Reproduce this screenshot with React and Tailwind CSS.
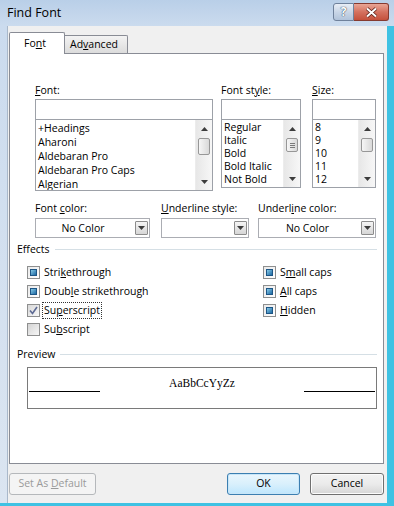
import React from 'react';

const Tri = ({ down }) => (
  <svg width="7" height="4" viewBox="0 0 7 4">
    <path d={down ? 'M0 0h7L3.5 4z' : 'M0 4h7L3.5 0z'} fill="#3c3c3c" />
  </svg>
);

function ScrollBar({ thumbClass, grip }) {
  return (
    <div className="w-[17px] h-full flex flex-col bg-gradient-to-r from-[#e7e7e7] to-[#f7f7f7] border-l border-[#ececec]">
      <div className="h-[17px] flex items-center justify-center">
        <Tri />
      </div>
      <div className="flex-1 px-[2px] pt-[1px]">
        <div className={`${thumbClass} rounded-[2px] border border-[#979797] bg-gradient-to-r from-[#f6f6f6] to-[#d9d9d9] flex flex-col items-center justify-center gap-[1px]`}>
          {grip && (
            <>
              <div className="w-[5px] h-px bg-[#7a7a7a]" />
              <div className="w-[5px] h-px bg-[#7a7a7a]" />
              <div className="w-[5px] h-px bg-[#7a7a7a]" />
            </>
          )}
        </div>
      </div>
      <div className="h-[17px] flex items-center justify-center">
        <Tri down />
      </div>
    </div>
  );
}

function ListBox({ items, boxClass, lineClass, thumbClass, grip }) {
  return (
    <div className={`${boxClass} border border-t-0 border-[#9da1a8] bg-white flex`}>
      <div className="flex-1 min-w-0 pl-[2px] pt-[1px] overflow-hidden">
        {items.map((it) => (
          <div key={it} className={`${lineClass} whitespace-nowrap`}>
            {it}
          </div>
        ))}
      </div>
      <ScrollBar thumbClass={thumbClass} grip={grip} />
    </div>
  );
}

const Label = ({ children }) => <div className="h-[16px] leading-[16px] whitespace-nowrap">{children}</div>;

function Combo({ text }) {
  return (
    <div className="mt-[2px] h-[20px] border border-[#abadb3] bg-white flex items-center">
      <div className="flex-1 text-center pr-[5px] leading-[16px]">{text}</div>
      <div className="w-[13px] h-[14px] mr-[1px] border border-[#8c8c8c] rounded-[1px] bg-gradient-to-b from-[#f5f5f5] to-[#d6d6d6] flex items-center justify-center">
        <Tri down />
      </div>
    </div>
  );
}

function Check({ state, label, focus }) {
  let box;
  if (state === 'mixed') {
    box = (
      <div className="w-[13px] h-[13px] border border-[#8e8f8f] bg-gradient-to-br from-[#e9e9e9] to-white p-[2px]">
        <div className="w-full h-full border border-[#1d5585] bg-gradient-to-br from-[#86cbe8] to-[#1b6aa3]" />
      </div>
    );
  } else if (state === 'checked') {
    box = (
      <div className="w-[13px] h-[13px] border border-[#8e8f8f] bg-gradient-to-br from-[#d8d8d8] to-[#f8f8f8] flex items-center justify-center">
        <svg width="9" height="9" viewBox="0 0 9 9">
          <path d="M1 4.5l2.5 3L8 1" fill="none" stroke="#5d6a94" strokeWidth="1.6" />
        </svg>
      </div>
    );
  } else {
    box = <div className="w-[13px] h-[13px] border border-[#8e8f8f] bg-gradient-to-br from-[#d4d4d4] to-[#f6f6f6]" />;
  }
  return (
    <div className="h-[19px] flex items-center">
      {box}
      <div className={`ml-[2px] px-[1px] leading-[15px] ${focus ? 'border border-dotted border-[#333]' : 'border border-transparent'}`}>
        {label}
      </div>
    </div>
  );
}

function Button({ children, w, kind }) {
  const base = `${w} h-[22px] rounded-[3px] border flex items-center justify-center`;
  let look = 'border-[#707070] bg-gradient-to-b from-[#f2f2f2] via-[#ebebeb] to-[#d6d6d6] shadow-[inset_0_0_0_1px_#fcfcfc]';
  if (kind === 'disabled') look = 'border-[#b5b8bb] bg-[#f4f4f4] text-[#9a9a9a]';
  if (kind === 'default')
    look = 'border-[#3c7fb1] bg-gradient-to-b from-[#eaf6fd] via-[#d9f0fc] to-[#bee6fd] shadow-[inset_0_0_0_1px_#c8e6f8]';
  return (
    <div className={`${base} ${look}`}>
      <span>{children}</span>
    </div>
  );
}

export default function App() {
  return (
    <div className="w-[394px] h-[506px] flex flex-col bg-[#cad9ec] text-[10.5px] text-black font-['Open_Sans',sans-serif] overflow-hidden">
      {/* title bar */}
      <div className="h-[26px] flex items-start bg-gradient-to-b from-[#b9cfe8] to-[#cbdbee]">
        <div className="ml-[7px] mt-[4px] text-[12.5px] leading-[18px]">Find Font</div>
        <div className="ml-auto mt-[3px] mr-[5px] flex">
          <div className="w-[21px] h-[18px] rounded-l-[3px] border border-[#6f819b] bg-gradient-to-b from-[#e8eef6] via-[#c9d6e7] to-[#b1c3da] flex items-center justify-center text-white font-bold text-[12px] [text-shadow:0_0_1px_#2b3a50,0_0_1px_#2b3a50]">
            ?
          </div>
          <div className="w-[35px] h-[18px] rounded-r-[3px] border border-l-0 border-[#853a30] bg-gradient-to-b from-[#e9a595] via-[#d4715f] to-[#c4503b] flex items-center justify-center">
            <svg width="13" height="11" viewBox="0 0 13 11">
              <path d="M2 1.5l9 8M11 1.5l-9 8" stroke="#5a1f17" strokeWidth="3.6" />
              <path d="M2 1.5l9 8M11 1.5l-9 8" stroke="#fff" strokeWidth="2" />
            </svg>
          </div>
        </div>
      </div>

      <div className="flex flex-1">
        {/* left frame */}
        <div className="w-[8px] bg-gradient-to-b from-[#cbdbee] to-[#dbe5f1] border-r border-[#a9b8ca]" />

        {/* body */}
        <div className="w-[379px] bg-[#f0f0f0] pl-[1px] pr-[3px] pt-[6px] flex flex-col">
          {/* tabs */}
          <div className="h-[21px] flex items-end">
            <div className="relative z-10 w-[56px] h-[22px] -mb-[1px] border border-b-0 border-[#898c95] rounded-t-[2px] bg-white pl-[14px] leading-[20px]">
              Fo<u>n</u>t
            </div>
            <div className="w-[63px] h-[18px] border border-l-0 border-b-0 border-[#898c95] rounded-tr-[2px] bg-gradient-to-b from-[#f3f3f3] to-[#dcdcdc] pl-[5px] leading-[17px]">
              Ad<u>v</u>anced
            </div>
          </div>

          {/* panel */}
          <div className="w-[375px] h-[411px] border border-[#898c95] bg-white flex flex-col">
            {/* font / style / size */}
            <div className="flex pt-[28px] pl-[25px]">
              <div className="w-[178px] flex flex-col">
                <Label>
                  <u>F</u>ont:
                </Label>
                <div className="mt-[1px] h-[21px] border border-[#9da1a8] bg-white" />
                <ListBox
                  items={['+Headings', 'Aharoni', 'Aldebaran Pro', 'Aldebaran Pro Caps', 'Algerian']}
                  boxClass="h-[71px]"
                  lineClass="h-[14px] leading-[14px]"
                  thumbClass="h-[17px]"
                />
              </div>
              <div className="w-[80px] ml-[8px] flex flex-col">
                <Label>
                  Font st<u>y</u>le:
                </Label>
                <div className="mt-[1px] h-[21px] border border-[#9da1a8] bg-white" />
                <ListBox
                  items={['Regular', 'Italic', 'Bold', 'Bold Italic', 'Not Bold']}
                  boxClass="h-[68px]"
                  lineClass="h-[13px] leading-[13px]"
                  thumbClass="h-[14px]"
                  grip
                />
              </div>
              <div className="w-[64px] ml-[11px] flex flex-col">
                <Label>
                  <u>S</u>ize:
                </Label>
                <div className="mt-[1px] h-[21px] border border-[#9da1a8] bg-white" />
                <ListBox
                  items={['8', '9', '10', '11', '12']}
                  boxClass="h-[68px]"
                  lineClass="h-[13px] leading-[13px]"
                  thumbClass="h-[14px]"
                />
              </div>
            </div>

            {/* colour / underline */}
            <div className="flex mt-[9px] pl-[25px]">
              <div className="w-[115px] flex flex-col">
                <Label>
                  Font <u>c</u>olor:
                </Label>
                <Combo text="No Color" />
              </div>
              <div className="w-[88px] ml-[11px] flex flex-col">
                <Label>
                  <u>U</u>nderline style:
                </Label>
                <Combo text="" />
              </div>
              <div className="w-[118px] ml-[9px] flex flex-col">
                <Label>
                  Underl<u>i</u>ne color:
                </Label>
                <Combo text="No Color" />
              </div>
            </div>

            {/* effects */}
            <div className="mt-[3px] pl-[7px] h-[16px] flex items-center">
              <div className="leading-[16px]">Effects</div>
              <div className="flex-1 h-px bg-[#d5dfe5] ml-[5px] mr-[6px]" />
            </div>
            <div className="mt-[6px] pl-[17px] flex">
              <div className="w-[236px] flex flex-col">
                <Check state="mixed" label={<>Stri<u>k</u>ethrough</>} />
                <Check state="mixed" label={<>Doub<u>l</u>e strikethrough</>} />
                <Check state="checked" focus label={<>Su<u>p</u>erscript</>} />
                <Check state="unchecked" label={<>Su<u>b</u>script</>} />
              </div>
              <div className="flex flex-col">
                <Check state="mixed" label={<>S<u>m</u>all caps</>} />
                <Check state="mixed" label={<><u>A</u>ll caps</>} />
                <Check state="mixed" label={<><u>H</u>idden</>} />
              </div>
            </div>

            {/* preview */}
            <div className="mt-[7px] pl-[7px] h-[16px] flex items-center">
              <div className="leading-[16px]">Preview</div>
              <div className="flex-1 h-px bg-[#d5dfe5] ml-[5px] mr-[6px]" />
            </div>
            <div className="mt-[5px] ml-[17px] w-[350px] h-[42px] border border-[#7a7a7a] bg-white flex items-start px-[1px]">
              <div className="w-[71px] h-[24px] border-b border-black" />
              <div className="flex-1 text-center h-[30px] leading-[30px] text-[11.5px] font-['Liberation_Serif',serif]">AaBbCcYyZz</div>
              <div className="w-[71px] h-[24px] border-b border-black" />
            </div>
          </div>

          {/* buttons */}
          <div className="mt-[9px] flex justify-between">
            <Button w="w-[87px]" kind="disabled">
              Set As <u>D</u>efault
            </Button>
            <div className="flex gap-[10px]">
              <Button w="w-[73px]" kind="default">
                OK
              </Button>
              <Button w="w-[74px]">Cancel</Button>
            </div>
          </div>
        </div>

        {/* right edge */}
        <div className="flex-1 bg-[#3fc2e3]" />
      </div>

      {/* bottom edge */}
      <div className="h-[3px] bg-[#3fc2e3]" />
    </div>
  );
}
